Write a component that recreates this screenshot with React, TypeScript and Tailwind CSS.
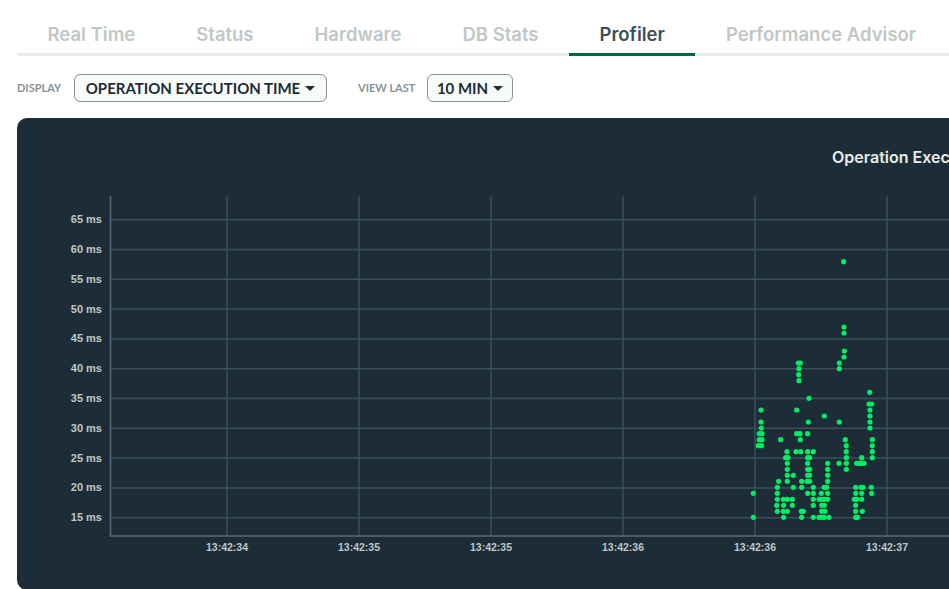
const tabs = ['Real Time', 'Status', 'Hardware', 'DB Stats', 'Profiler', 'Performance Advisor']

const yLabels = [65, 60, 55, 50, 45, 40, 35, 30, 25, 20, 15]
const xTicks = [
  { x: 227, label: '13:42:34' },
  { x: 359, label: '13:42:35' },
  { x: 491, label: '13:42:35' },
  { x: 623, label: '13:42:36' },
  { x: 755, label: '13:42:36' },
  { x: 887, label: '13:42:37' },
]

// row y -> x positions, measured off the reference at 3x from (740,400)
const rows: [number, number[]][] = [
  [-415, [311]],
  [-219, [312]],
  [-201, [312]],
  [-147, [313]],
  [-129, [312]],
  [-111, [175, 181, 298]],
  [-94, [177, 298]],
  [-76, [176]],
  [-58, [177]],
  [-5, [207]],
  [-23, [389]],
  [12, [387, 395]],
  [30, [63, 170, 390]],
  [48, [253, 390]],
  [66, [63, 205, 298, 390]],
  [84, [64, 390]],
  [101, [58, 66, 170, 180, 203]],
  [119, [58, 66, 122, 181, 316, 397]],
  [137, [55, 65, 319, 397]],
  [155, [141, 168, 182, 203, 220, 319, 397]],
  [173, [137, 144, 203, 209, 319, 365, 397]],
  [190, [142, 203, 263, 297, 319, 350, 358, 366, 372]],
  [208, [142, 203, 209, 263, 319]],
  [226, [142, 160, 203, 209, 263]],
  [244, [116, 142, 185, 201, 209, 263]],
  [262, [112, 160, 185, 220, 252, 260, 347, 363, 369, 394]],
  [280, [40, 112, 203, 220, 244, 263, 347, 365, 395]],
  [298, [112, 130, 142, 157, 220, 237, 245, 253, 263, 343, 350, 365]],
  [316, [110, 131, 157, 220, 245, 253, 347]],
  [334, [112, 130, 142, 184, 190, 245, 255, 347, 367]],
  [352, [40, 131, 185, 220, 237, 245, 253, 267, 347, 353]],
]

function Caret() {
  return (
    <svg width="10" height="5" viewBox="0 0 10 5" className="ml-[5px] mt-[1px]">
      <path d="M0 0h10L5 5z" fill="#1c2d38" />
    </svg>
  )
}

function Select({ label, className }: { label: string; className: string }) {
  return (
    <div className={`h-[28px] flex items-center justify-center rounded-[6px] border border-[#889397] bg-[#f9fbfa] text-[#1c2d38] text-[15px] font-bold whitespace-nowrap ${className}`}>
      {label}
      <Caret />
    </div>
  )
}

export default function App() {
  return (
    <div className="w-[949px] h-[589px] overflow-hidden bg-white pl-[17px] font-['Lato',sans-serif]">
      {/* Tabs */}
      <div className="h-[56px] pt-[22px] flex border-b-[3px] border-[#e8edeb] font-['Inter',sans-serif]">
        {tabs.map((tab) => (
          <div
            key={tab}
            className={`h-[34px] px-[30.5px] text-[18.5px] leading-[24px] font-semibold whitespace-nowrap ${
              tab === 'Profiler' ? 'text-[#3d4f58] border-b-[3px] border-[#00684a]' : 'text-[#c1c7c6]'
            }`}
          >
            {tab}
          </div>
        ))}
      </div>

      {/* Filters */}
      <div className="mt-[18px] flex items-center">
        <span className="w-[57px] text-[11px] font-bold text-[#889397]">DISPLAY</span>
        <Select label="OPERATION EXECUTION TIME" className="w-[253px]" />
        <span className="ml-[31px] w-[69px] text-[11px] font-bold text-[#889397]">VIEW LAST</span>
        <Select label="10 MIN" className="w-[86px]" />
      </div>

      {/* Chart */}
      <div className="mt-[16px] h-[472px] w-[932px] overflow-hidden rounded-tl-[10px] rounded-bl-[10px] bg-[#1c2d38]">
        <div className="pt-[29px] pl-[815px] h-[49px] font-['Inter',sans-serif] text-[16px] leading-[20px] font-semibold text-[#e8edeb] whitespace-nowrap">
          Operation Execution Time
        </div>
        <svg width="932" height="423" viewBox="17 167 932 423" className="block font-['Liberation_Sans',sans-serif]">
          {yLabels.map((v) => {
            const y = 219.7 + (65 - v) * 5.96
            return (
              <g key={v}>
                <line x1="110" x2="949" y1={y} y2={y} stroke="#3d4f58" strokeWidth="1.5" />
                <text x="102" y={y + 3.4} textAnchor="end" fontSize="11" fontWeight="700" fill="#c1c7c6">
                  {v} ms
                </text>
              </g>
            )
          })}
          {xTicks.map((t) => (
            <g key={t.x}>
              <line x1={t.x} x2={t.x} y1="196" y2="536" stroke="#3d4f58" strokeWidth="1.5" />
              <text x={t.x} y="551" textAnchor="middle" fontSize="10.5" fontWeight="700" fill="#c1c7c6">
                {t.label}
              </text>
            </g>
          ))}
          <line x1="110.5" x2="110.5" y1="196" y2="536" stroke="#5c6c75" strokeWidth="1.5" />
          <line x1="110" x2="949" y1="536" y2="536" stroke="#5c6c75" strokeWidth="1.5" />
          {rows.flatMap(([y, xs]) =>
            xs.map((x) => (
              <circle key={`${x}-${y}`} cx={740 + x / 3} cy={400 + y / 3} r="2.6" fill="#00ed64" />
            ))
          )}
        </svg>
      </div>
    </div>
  )
}
